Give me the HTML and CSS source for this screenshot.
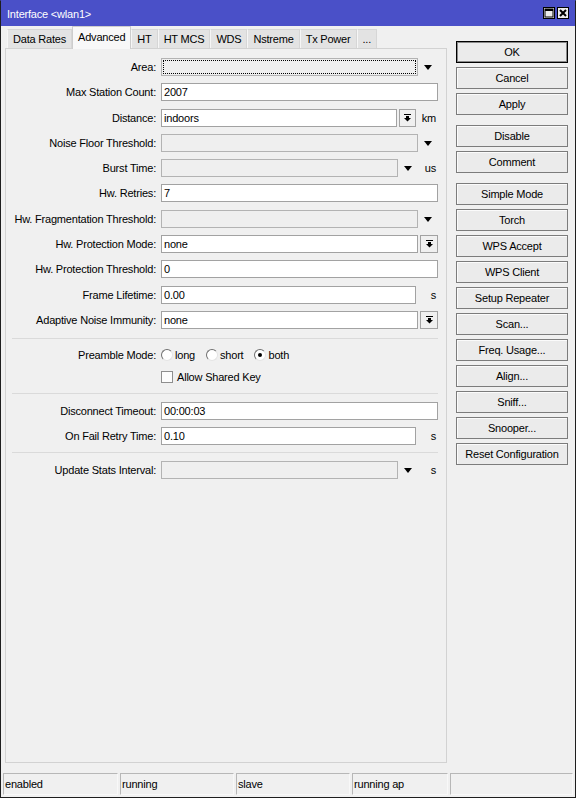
FILE: index.html
```html
<!DOCTYPE html>
<html>
<head>
<meta charset="utf-8">
<title>Interface &lt;wlan1&gt;</title>
<link rel="stylesheet" href="styles.css">
</head>
<body>
<div class="window">
  <div class="titlebar">
    <span class="title">Interface &lt;wlan1&gt;</span>
    <div class="tb-buttons">
      <span class="tb-btn"><svg width="10" height="10" viewBox="0 0 10 10"><rect x="1" y="1" width="8" height="8" fill="none" stroke="#000" stroke-width="1"/><rect x="1" y="1" width="8" height="2" fill="#000"/></svg></span>
      <span class="tb-btn"><svg width="10" height="10" viewBox="0 0 10 10"><path d="M2 2 L8 8 M8 2 L2 8" stroke="#000" stroke-width="2"/></svg></span>
    </div>
  </div>
  <div class="content">
    <div class="left">
      <div class="tabs">
        <span class="tab">Data Rates</span>
        <span class="tab active">Advanced</span>
        <span class="tab ht">HT</span>
        <span class="tab">HT MCS</span>
        <span class="tab">WDS</span>
        <span class="tab">Nstreme</span>
        <span class="tab">Tx Power</span>
        <span class="tab">...</span>
      </div>
      <div class="panel">
        <div class="rows">
          <div class="row"><label class="lbl">Area:</label><div class="ctl"><span class="field disabled focus"></span><span class="tri"></span></div></div>
          <div class="row"><label class="lbl">Max Station Count:</label><div class="ctl"><span class="field">2007</span></div></div>
          <div class="row"><label class="lbl">Distance:</label><div class="ctl"><span class="field">indoors</span><span class="ddbtn"><svg width="7" height="8" viewBox="0 0 7 8"><rect x="0" y="0" width="7" height="1" fill="#000"/><rect x="2" y="2" width="3" height="2" fill="#000"/><polygon points="0,4 7,4 3.5,7.5" fill="#000"/></svg></span><span class="unit w22">km</span></div></div>
          <div class="row"><label class="lbl">Noise Floor Threshold:</label><div class="ctl"><span class="field disabled"></span><span class="tri"></span></div></div>
          <div class="row"><label class="lbl">Burst Time:</label><div class="ctl"><span class="field disabled"></span><span class="tri"></span><span class="unit w20">us</span></div></div>
          <div class="row"><label class="lbl">Hw. Retries:</label><div class="ctl"><span class="field">7</span></div></div>
          <div class="row"><label class="lbl">Hw. Fragmentation Threshold:</label><div class="ctl"><span class="field disabled"></span><span class="tri"></span></div></div>
          <div class="row"><label class="lbl">Hw. Protection Mode:</label><div class="ctl"><span class="field">none</span><span class="ddbtn wide"><svg width="7" height="8" viewBox="0 0 7 8"><rect x="0" y="0" width="7" height="1" fill="#000"/><rect x="2" y="2" width="3" height="2" fill="#000"/><polygon points="0,4 7,4 3.5,7.5" fill="#000"/></svg></span></div></div>
          <div class="row"><label class="lbl">Hw. Protection Threshold:</label><div class="ctl"><span class="field">0</span></div></div>
          <div class="row"><label class="lbl">Frame Lifetime:</label><div class="ctl"><span class="field">0.00</span><span class="unit w22">s</span></div></div>
          <div class="row"><label class="lbl">Adaptive Noise Immunity:</label><div class="ctl"><span class="field">none</span><span class="ddbtn wide"><svg width="7" height="8" viewBox="0 0 7 8"><rect x="0" y="0" width="7" height="1" fill="#000"/><rect x="2" y="2" width="3" height="2" fill="#000"/><polygon points="0,4 7,4 3.5,7.5" fill="#000"/></svg></span></div></div>
        </div>
        <div class="sep s1"></div>
        <div class="row"><label class="lbl">Preamble Mode:</label>
          <div class="ctl radios">
            <span class="ritem"><span class="radio"></span>long</span>
            <span class="ritem"><span class="radio"></span>short</span>
            <span class="ritem"><span class="radio on"></span>both</span>
          </div>
        </div>
        <div class="row r-check"><span class="lbl"></span>
          <div class="ctl"><span class="ritem chk"><span class="checkbox"></span>Allow Shared Key</span></div>
        </div>
        <div class="sep s2"></div>
        <div class="rows">
          <div class="row"><label class="lbl">Disconnect Timeout:</label><div class="ctl"><span class="field">00:00:03</span></div></div>
          <div class="row"><label class="lbl">On Fail Retry Time:</label><div class="ctl"><span class="field">0.10</span><span class="unit w22">s</span></div></div>
        </div>
        <div class="sep s2"></div>
        <div class="row"><label class="lbl">Update Stats Interval:</label><div class="ctl"><span class="field disabled"></span><span class="tri"></span><span class="unit w20">s</span></div></div>
      </div>
    </div>
    <div class="buttons">
      <div class="group">
        <button class="btn default">OK</button>
        <button class="btn">Cancel</button>
        <button class="btn">Apply</button>
      </div>
      <div class="group">
        <button class="btn">Disable</button>
        <button class="btn">Comment</button>
      </div>
      <div class="group">
        <button class="btn">Simple Mode</button>
        <button class="btn">Torch</button>
        <button class="btn">WPS Accept</button>
        <button class="btn">WPS Client</button>
        <button class="btn">Setup Repeater</button>
        <button class="btn">Scan...</button>
        <button class="btn">Freq. Usage...</button>
        <button class="btn">Align...</button>
        <button class="btn">Sniff...</button>
        <button class="btn">Snooper...</button>
        <button class="btn">Reset Configuration</button>
      </div>
    </div>
  </div>
  <div class="status">
    <span class="cell c1">enabled</span>
    <span class="cell c2">running</span>
    <span class="cell c3">slave</span>
    <span class="cell c4">running ap</span>
    <span class="cell c5"></span>
  </div>
</div>
</body>
</html>
```

FILE: styles.css
```css
* { box-sizing: border-box; }
html, body { margin: 0; padding: 0; }
body {
  font-family: "Liberation Sans", Arial, sans-serif;
  font-size: 11px;
  letter-spacing: -0.2px;
  color: #000;
  background: #f0f0f0;
}
.window {
  width: 576px;
  height: 798px;
  border: 1px solid #1e1e1e;
  border-top-color: #4a50c8;
  background: #f0f0f0;
  display: flex;
  flex-direction: column;
}
.titlebar {
  height: 25px;
  flex: none;
  background: #4a50c8;
  color: #fff;
  display: flex;
  align-items: center;
  justify-content: space-between;
  padding: 0 6px 0 6px;
}
.title { font-size: 11px; }
.tb-buttons { display: flex; gap: 2px; margin-top: -1px; }
.tb-btn {
  width: 12px;
  height: 12px;
  border: 1px solid #000;
  background: #ececec;
  display: flex;
  align-items: center;
  justify-content: center;
}
.tb-btn svg { display: block; }
.content {
  flex: 1;
  display: flex;
  min-height: 0;
}
.left {
  width: 446px;
  padding-left: 4px;
  display: flex;
  flex-direction: column;
}
.tabs {
  height: 22px;
  display: flex;
  align-items: flex-end;
  padding-left: 2px;
  gap: 0;
}
.tab {
  height: 19px;
  text-align: center;
  line-height: 18px;
  padding: 0 5px;
  background: #e3e3e3;
  border: 1px solid #d6d6d6;
  border-left-color: #f6f6f6;
  border-bottom: none;
  white-space: nowrap;
}
.tab.ht { min-width: 25px; }
.tab.active {
  line-height: 20px;
  background: #f8f8f8;
  border-color: #cdcdcd;
  position: relative;
  z-index: 1;
  margin-bottom: -1px;
  height: 23px;
}
.panel {
  height: 715px;
  border: 1px solid #d2d2d2;
  padding: 9px 7px 0 0;
}
.rows { display: flex; flex-direction: column; gap: 7.3px; }
.row {
  height: 18px;
  display: flex;
  align-items: center;
}
.lbl {
  width: 150px;
  text-align: right;
  white-space: nowrap;
  flex: none;
}
.ctl {
  width: 277px;
  margin-left: 5px;
  height: 18px;
  display: flex;
  align-items: center;
}
.field {
  flex: 1;
  height: 18px;
  border: 1px solid #a2a2a2;
  background: #fff;
  line-height: 16px;
  padding-left: 2px;
  white-space: nowrap;
  overflow: hidden;
}
.field.disabled {
  background: #efefef;
  border-color: #b3b3b3;
}
.field.focus {
  outline: 1px dotted #000;
  outline-offset: -3px;
}
.tri {
  width: 20px;
  height: 18px;
  flex: none;
  position: relative;
}
.tri::after {
  content: "";
  position: absolute;
  left: 6px;
  top: 7px;
  border-left: 4.5px solid transparent;
  border-right: 4.5px solid transparent;
  border-top: 5px solid #000;
}
.ddbtn {
  width: 17px;
  height: 18px;
  flex: none;
  margin-left: 2px;
  border: 1px solid #a2a2a2;
  background: #f0f0f0;
  display: flex;
  align-items: center;
  justify-content: center;
}
.ddbtn.wide { width: 18px; }
.ddbtn svg { display: block; }
.unit {
  flex: none;
  text-align: right;
  padding-right: 2px;
}
.unit.w22 { width: 22px; }
.unit.w20 { width: 20px; }
.sep {
  height: 1px;
  background: #dadada;
  margin-left: 6px;
  margin-right: 1px;
}
.sep.s1 { margin-top: 9px; margin-bottom: 7px; }
.sep.s2 { margin-top: 7px; margin-bottom: 8px; }
.r-check { margin-top: 4px; }
.radios { gap: 11px; }
.ritem {
  display: flex;
  align-items: center;
  gap: 2px;
  white-space: nowrap;
}
.ritem.chk { gap: 4px; }
.radio {
  width: 12px;
  height: 12px;
  border-radius: 50%;
  border: 1px solid;
  border-color: #6f6f6f #e4e4e4 #e4e4e4 #6f6f6f;
  background: #fff;
  position: relative;
  flex: none;
}
.radio.on::after {
  content: "";
  position: absolute;
  left: 3px;
  top: 3px;
  width: 4px;
  height: 4px;
  border-radius: 50%;
  background: #000;
}
.checkbox {
  width: 12px;
  height: 12px;
  border: 1px solid #8e8e8e;
  background: #fcfcfc;
  flex: none;
}
.buttons {
  margin-left: 9px;
  margin-top: 15px;
  width: 112px;
  display: flex;
  flex-direction: column;
  gap: 10px;
}
.group { display: flex; flex-direction: column; gap: 4px; }
.btn {
  height: 22px;
  width: 112px;
  margin: 0;
  padding: 0;
  font-family: inherit;
  font-size: 11px;
  letter-spacing: -0.2px;
  color: #000;
  background: #ebebeb;
  border: 1px solid #7c7c7c;
  box-shadow: inset 1px 1px 0 #fbfbfb;
  text-align: center;
}
.btn.default {
  border-color: #000;
  box-shadow: inset 0 0 0 1px #8a8a8a;
}
.status {
  height: 22px;
  flex: none;
  margin: 0 0 2px 2px;
  display: flex;
  gap: 2px;
}
.cell {
  height: 22px;
  border: 1px solid #b7b7b7;
  border-right-color: #f8f8f8;
  border-bottom-color: #f8f8f8;
  padding-left: 1px;
  line-height: 20px;
  white-space: nowrap;
}
.c1 { width: 115px; }
.c2 { width: 114px; }
.c3 { width: 114px; }
.c4 { width: 96px; }
.c5 { width: 123px; }
```
